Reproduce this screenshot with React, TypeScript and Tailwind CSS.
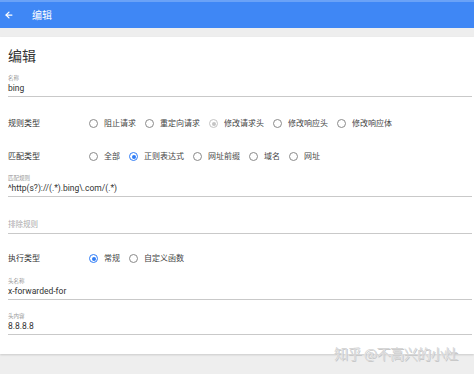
import { ArrowLeft } from 'lucide-react'

type Opt = { label: string; state?: 'on' | 'muted' }

function Radio({ label, state }: Opt) {
  return (
    <div className="flex items-center gap-[6px] mr-[9px]">
      {state === 'on' ? (
        <span className="flex h-[9px] w-[9px] items-center justify-center rounded-full border border-[#2f7cf6]">
          <span className="h-[4px] w-[4px] rounded-full bg-[#2f7cf6]" />
        </span>
      ) : state === 'muted' ? (
        <span className="flex h-[9px] w-[9px] items-center justify-center rounded-full border border-[#c4c4c4]">
          <span className="h-[4px] w-[4px] rounded-full bg-[#c4c4c4]" />
        </span>
      ) : (
        <span className="h-[9px] w-[9px] rounded-full border border-[#8a8a8a]" />
      )}
      <span className="text-[8px] text-[#444]">{label}</span>
    </div>
  )
}

function RadioRow({ title, options }: { title: string; options: Opt[] }) {
  return (
    <div className="flex items-center h-[33px]">
      <div className="w-[81px] text-[8px] text-[#333]">{title}</div>
      <div className="flex items-center">
        {options.map((o) => (
          <Radio key={o.label} {...o} />
        ))}
      </div>
    </div>
  )
}

function Field({ label, value }: { label: string; value: string }) {
  return (
    <div className="border-b border-[#c9c9c9] pb-[2px]">
      <div className="text-[5.5px] leading-[7px] text-[#999]">{label}</div>
      <div className="text-[8.5px] leading-[12px] text-[#333]">{value}</div>
    </div>
  )
}

export default function App() {
  return (
    <div className="relative h-[374px] w-[474px] overflow-hidden bg-[#eeeeee] font-['Roboto','Noto_Sans_CJK_SC',sans-serif]">
      <div className="flex h-[28px] items-center bg-[#3f87f5] border-t-[2px] border-[#6aa2f7]">
        <ArrowLeft className="ml-[4px] h-[10px] w-[10px] text-white" strokeWidth={3} />
        <span className="ml-[18px] text-[10px] text-white">编辑</span>
      </div>
      <div className="mt-[9px] h-[317px] bg-white pl-[8px] pr-[2px] shadow-[0_1px_2px_rgba(0,0,0,0.15)]">
        <div className="pt-[10px] text-[14px] leading-[18px] text-[#333]">编辑</div>
        <div className="mt-[10px]">
          <Field label="名称" value="bing" />
        </div>
        <div className="mt-[10px]">
          <RadioRow
            title="规则类型"
            options={[
              { label: '阻止请求' },
              { label: '重定向请求' },
              { label: '修改请求头', state: 'muted' },
              { label: '修改响应头' },
              { label: '修改响应体' },
            ]}
          />
          <RadioRow
            title="匹配类型"
            options={[
              { label: '全部' },
              { label: '正则表达式', state: 'on' },
              { label: '网址前缀' },
              { label: '域名' },
              { label: '网址' },
            ]}
          />
        </div>
        <div className="mt-[2px]">
          <Field label="匹配规则" value="^http(s?)://(.*).bing\.com/(.*)" />
        </div>
        <div className="mt-[22px] border-b border-[#c9c9c9] pb-[2px] text-[7.5px] leading-[12px] text-[#aaa]">
          排除规则
        </div>
        <div className="mt-[8px]">
          <RadioRow
            title="执行类型"
            options={[{ label: '常规', state: 'on' }, { label: '自定义函数' }]}
          />
        </div>
        <div className="mt-[3px]">
          <Field label="头名称" value="x-forwarded-for" />
        </div>
        <div className="mt-[13px]">
          <Field label="头内容" value="8.8.8.8" />
        </div>
      </div>
      <div className="absolute left-[334px] top-[343px] text-[14px] tracking-[-0.5px] text-[#d6d6d6] [text-shadow:0_0_1px_#fff,1px_1px_0_#c4c4c4] font-['Noto_Sans_CJK_SC',sans-serif]">
        知乎 @不高兴的小灶
      </div>
    </div>
  )
}
